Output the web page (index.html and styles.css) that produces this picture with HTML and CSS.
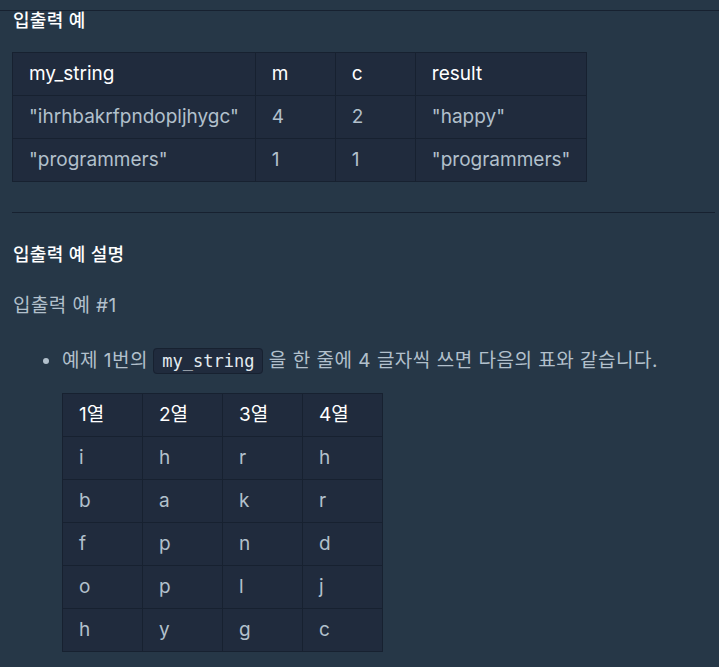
FILE: index.html
```html
<!DOCTYPE html>
<html lang="ko">
<head>
<meta charset="utf-8">
<link rel="stylesheet" href="styles.css">
</head>
<body>
<div class="topbar"></div>
<div class="content">
  <h5 class="h-title">입출력 예</h5>
  <table class="tbl">
    <thead>
      <tr><th>my_string</th><th>m</th><th>c</th><th>result</th></tr>
    </thead>
    <tbody>
      <tr><td>"ihrhbakrfpndopljhygc"</td><td>4</td><td>2</td><td>"happy"</td></tr>
      <tr><td>"programmers"</td><td>1</td><td>1</td><td>"programmers"</td></tr>
    </tbody>
  </table>
  <hr class="sep">
  <h5 class="h-title h-second">입출력 예 설명</h5>
  <p class="sub">입출력 예 #1</p>
  <ul class="list">
    <li><span class="txt">예제 1번의</span> <code>my_string</code> <span class="txt">을 한 줄에 4 글자씩 쓰면 다음의 표와 같습니다.</span>
      <table class="tbl tbl-inner">
        <thead>
          <tr><th>1열</th><th>2열</th><th>3열</th><th>4열</th></tr>
        </thead>
        <tbody>
          <tr><td>i</td><td>h</td><td>r</td><td>h</td></tr>
          <tr><td>b</td><td>a</td><td>k</td><td>r</td></tr>
          <tr><td>f</td><td>p</td><td>n</td><td>d</td></tr>
          <tr><td>o</td><td>p</td><td>l</td><td>j</td></tr>
          <tr><td>h</td><td>y</td><td>g</td><td>c</td></tr>
        </tbody>
      </table>
    </li>
  </ul>
</div>
</body>
</html>
```

FILE: styles.css
```css
html, body {
  margin: 0;
  padding: 0;
  background: #263747;
}
body {
  font-family: Inter, "Noto Sans CJK KR", sans-serif;
  color: #b2c0cc;
  font-size: 19px;
  line-height: 1.6;
}
.topbar {
  height: 10px;
  border-bottom: 1px solid #172130;
}
.content {
  padding: 0 4px 0 12px;
}
.h-title {
  margin: 0;
  font-size: 18px;
  font-weight: 500;
  color: #ffffff;
  line-height: 20px;
  padding-left: 1px;
  letter-spacing: 0.3px;
}
.tbl {
  border-collapse: collapse;
  background: #202b3d;
  margin-top: 21px;
}
.tbl th, .tbl td {
  border: 1px solid #172130;
  padding: 0 16px;
  height: 42px;
  min-width: 47px;
  text-align: left;
  vertical-align: middle;
  font-size: 19px;
  line-height: 26px;
  white-space: nowrap;
  letter-spacing: 0;
}
.tbl th {
  color: #ffffff;
  font-weight: 400;
}
.tbl td {
  color: #b2c0cc;
  font-weight: 400;
}
.sep {
  margin: 30px 0 0 0;
  border: 0;
  border-top: 1px solid #172130;
}
.h-second {
  margin-top: 32px;
}
.sub {
  margin: 26px 0 0 1px;
  font-size: 19px;
  color: #b2c0cc;
  letter-spacing: 0.4px;
}
.list {
  margin: 25px 0 0 0;
  padding-left: 50px;
}
.list li {
  font-size: 19px;
}
.txt {
  letter-spacing: 0.5px;
}
.list li::marker {
  color: #b2c0cc;
}
code {
  font-family: "DejaVu Sans Mono", monospace;
  font-size: 17px;
  color: #e4ebf1;
  background: #202b3d;
  border: 1px solid #172130;
  border-radius: 4px;
  padding: 2px 8px;
}
.tbl-inner {
  margin-top: 16px;
  margin-left: 0;
}
.tbl-inner th, .tbl-inner td {
  width: 47px;
}
```
